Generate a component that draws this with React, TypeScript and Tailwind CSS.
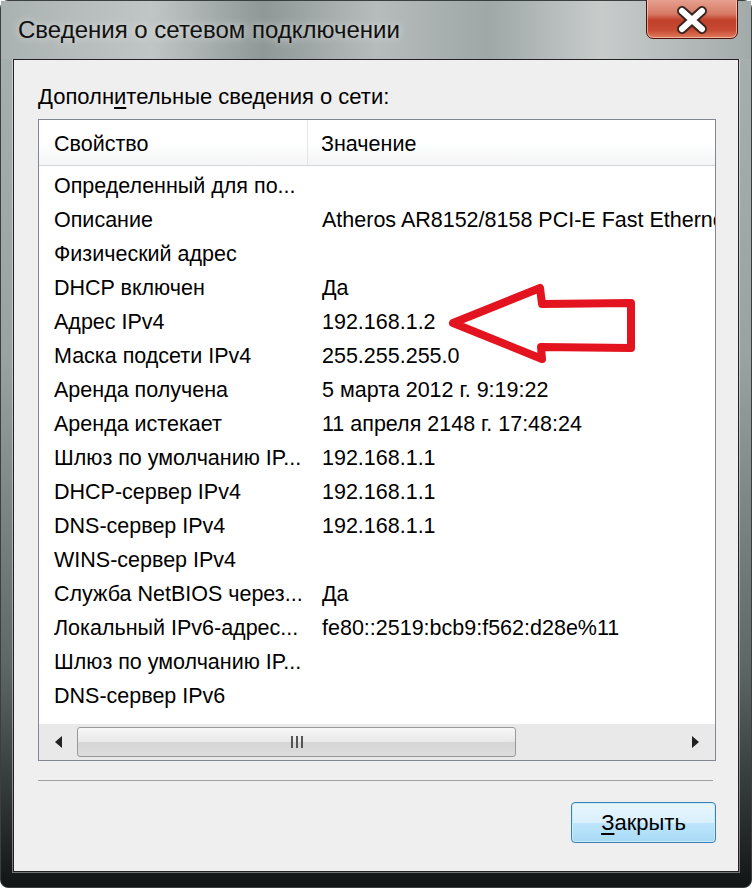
import React from "react";

const ROWS: [string, string][] = [
  ["Определенный для по...", ""],
  ["Описание", "Atheros AR8152/8158 PCI-E Fast Ethernet Controller (NDIS 6.20)"],
  ["Физический адрес", ""],
  ["DHCP включен", "Да"],
  ["Адрес IPv4", "192.168.1.2"],
  ["Маска подсети IPv4", "255.255.255.0"],
  ["Аренда получена", "5 марта 2012 г. 9:19:22"],
  ["Аренда истекает", "11 апреля 2148 г. 17:48:24"],
  ["Шлюз по умолчанию IP...", "192.168.1.1"],
  ["DHCP-сервер IPv4", "192.168.1.1"],
  ["DNS-сервер IPv4", "192.168.1.1"],
  ["WINS-сервер IPv4", ""],
  ["Служба NetBIOS через...", "Да"],
  ["Локальный IPv6-адрес...", "fe80::2519:bcb9:f562:d28e%11"],
  ["Шлюз по умолчанию IP...", ""],
  ["DNS-сервер IPv6", ""],
];

function CloseButton() {
  return (
    <div className="absolute left-[645px] top-[-4px] flex h-[42px] w-[92px] items-center justify-center rounded-b-[7px] border border-[#4a1208] bg-[linear-gradient(180deg,#e9a595_0%,#d77a66_40%,#c0402a_55%,#c84a33_80%,#e07a5c_100%)] shadow-[inset_0_0_0_1px_rgba(255,220,210,0.6)]">
      <svg width="34" height="28" viewBox="0 0 34 28" className="mt-[4px]">
        <path d="M7 5 L27 23 M27 5 L7 23" stroke="#3b2520" strokeWidth="10" strokeLinecap="round" />
        <path d="M7 5 L27 23 M27 5 L7 23" stroke="#ffffff" strokeWidth="6" strokeLinecap="round" />
      </svg>
    </div>
  );
}

function RedArrow() {
  return (
    <svg
      className="pointer-events-none absolute left-[440px] top-[276px]"
      width="200"
      height="92"
      viewBox="440 276 200 92"
    >
      <path
        d="M452 322 L539 287 L541 303 L630 302 L630 347 L540 346 L541 358 Z"
        fill="none"
        stroke="#e3141f"
        strokeWidth="8"
        strokeLinejoin="round"
      />
    </svg>
  );
}

function HScrollbar() {
  return (
    <div className="flex h-[36px] shrink-0 items-center bg-[#e9e9e9] px-[2px] py-[3px]">
      <div className="flex h-full w-[36px] items-center justify-center">
        <svg width="8" height="12" viewBox="0 0 8 12">
          <path d="M7 0 L0 6 L7 12 Z" fill="#222" />
        </svg>
      </div>
      <div className="flex h-full w-[439px] items-center justify-center rounded-[3px] border border-[#999] bg-[linear-gradient(180deg,#f7f7f7_0%,#e8e8e8_50%,#d6d6d6_51%,#dcdcdc_100%)]">
        <div className="flex gap-[3px]">
          <span className="h-[12px] w-[2px] bg-[#555]" />
          <span className="h-[12px] w-[2px] bg-[#555]" />
          <span className="h-[12px] w-[2px] bg-[#555]" />
        </div>
      </div>
      <div className="flex-1" />
      <div className="flex h-full w-[36px] items-center justify-center">
        <svg width="8" height="12" viewBox="0 0 8 12">
          <path d="M1 0 L8 6 L1 12 Z" fill="#222" />
        </svg>
      </div>
    </div>
  );
}

export default function App() {
  return (
    <div className="h-[888px] w-[752px] overflow-hidden bg-white font-['Liberation_Sans',Arial,sans-serif] text-[21.5px] text-black">
      <div className="relative flex h-[888px] w-[752px] flex-col rounded-[8px] border border-[#3a3f3f] bg-[linear-gradient(180deg,#a9b1b0_0%,#9aa3a2_40%,#5f6766_75%,#121515_100%)]">
        {/* title bar */}
        <div className="relative h-[58px] shrink-0 bg-[linear-gradient(90deg,#aab2b1_0%,#c0c6c5_20%,#8f9897_35%,#b6bcbb_50%,#9fa8a7_65%,#c7cccb_80%,#a3abaa_100%)]">
          <div className="absolute left-[17px] top-[14px] text-[24px] leading-[30px] text-[#111] [text-shadow:0_0_8px_rgba(255,255,255,0.7)]">
            Сведения о сетевом подключении
          </div>
          <CloseButton />
        </div>

        {/* client area */}
        <div className="mx-[12px] mb-[15px] flex flex-1 flex-col border border-[#222] bg-[#efefef] shadow-[0_0_0_1px_rgba(255,255,255,0.4)]">
          <div className="pl-[24px] pt-[23px] text-[22px] leading-[28px]">
            Дополн<span className="underline underline-offset-[3px]">и</span>тельные сведения о сети:
          </div>

          <div className="ml-[24px] mt-[8px] flex h-[642px] w-[678px] flex-col overflow-hidden border border-[#828790] bg-white">
            {/* header */}
            <div className="flex h-[46px] shrink-0 border-b border-[#d5d5d5] bg-[linear-gradient(180deg,#ffffff_0%,#ffffff_50%,#f4f5f6_100%)]">
              <div className="flex w-[269px] items-center border-r border-[#e3e5e7] pl-[15px] pt-[3px]">Свойство</div>
              <div className="flex flex-1 items-center pl-[13px] pt-[3px]">Значение</div>
            </div>
            {/* rows */}
            <div className="flex flex-1 flex-col overflow-hidden pt-[3px]">
              {ROWS.map(([k, v], i) => (
                <div key={i} className="flex h-[34px] shrink-0 items-center whitespace-nowrap">
                  <div className="w-[269px] shrink-0 overflow-hidden pl-[15px]">{k}</div>
                  <div className="pl-[14px]">{v}</div>
                </div>
              ))}
            </div>
            <HScrollbar />
          </div>

          <div className="ml-[24px] mt-[19px] h-[2px] w-[675px] border-t border-[#a0a0a0] border-b-white" />

          <div className="flex justify-end pr-[22px] pt-[20px]">
            <button
              type="button"
              className="flex h-[41px] w-[145px] items-center justify-center rounded-[4px] border border-[#3c7fb1] bg-[linear-gradient(180deg,#eaf6fd_0%,#d9f0fc_50%,#bee6fd_51%,#a7d9f5_100%)] text-[22px] shadow-[inset_0_0_0_1px_#c7ecfc]"
            >
              <span className="underline underline-offset-[3px]">З</span>акрыть
            </button>
          </div>
        </div>

        <RedArrow />
      </div>
    </div>
  );
}
